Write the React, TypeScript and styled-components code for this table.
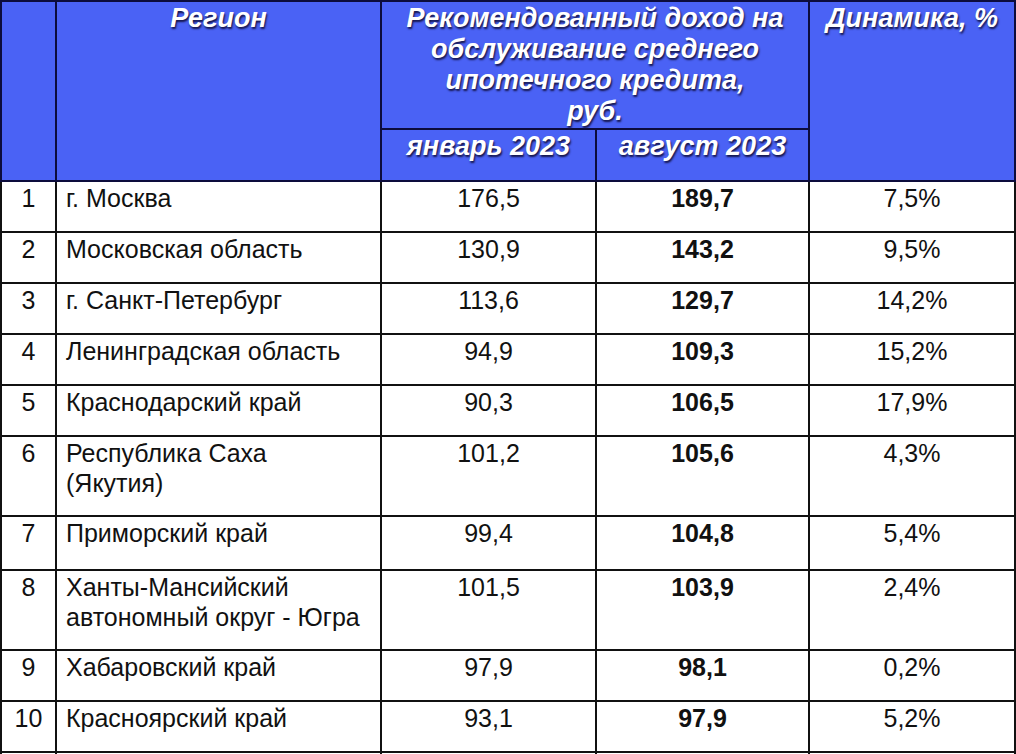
import React from "react";
import styled, { createGlobalStyle } from "styled-components";

const Global = createGlobalStyle`
  html, body { margin: 0; padding: 0; background: #ffffff; overflow: hidden; }
  body { font-family: "Liberation Sans", Arial, sans-serif; }
`;

const Page = styled.div`
  width: 1016px;
  height: 754px;
  overflow: hidden;
  background: #fff;
`;

const Table = styled.table`
  width: 1014px;
  border-collapse: collapse;
  table-layout: fixed;
  font-family: "Liberation Sans", Arial, sans-serif;
`;

const Col = styled.col<{ $w: number }>`
  width: ${(p) => p.$w}px;
`;

const HeadRow = styled.tr<{ $h: number }>`
  height: ${(p) => p.$h}px;
`;

const HeadCell = styled.th`
  background: #4a62f5;
  border: 2px solid #0c0c3c;
  color: #ffffff;
  font-size: 27px;
  font-weight: bold;
  font-style: italic;
  line-height: 31px;
  text-align: center;
  vertical-align: top;
  padding: 1px 2px 0;
  text-shadow: 1px 2px 2px #15154a;
  white-space: nowrap;
`;

const BodyRow = styled.tr<{ $h: number }>`
  height: ${(p) => p.$h}px;
`;

const Cell = styled.td<{ $align?: "left" | "center"; $bold?: boolean }>`
  border: 2px solid #111111;
  color: #111111;
  font-size: 25px;
  line-height: 30px;
  vertical-align: top;
  padding: ${(p) => (p.$align === "left" ? "1px 0 0 9px" : "1px 0 0")};
  text-align: ${(p) => p.$align ?? "center"};
  font-weight: ${(p) => (p.$bold ? "bold" : "normal")};
  white-space: nowrap;
`;

const rows: { n: string; region: string[]; jan: string; aug: string; dyn: string; h: number }[] = [
  { n: "1", region: ["г. Москва"], jan: "176,5", aug: "189,7", dyn: "7,5%", h: 51 },
  { n: "2", region: ["Московская область"], jan: "130,9", aug: "143,2", dyn: "9,5%", h: 51 },
  { n: "3", region: ["г. Санкт-Петербург"], jan: "113,6", aug: "129,7", dyn: "14,2%", h: 51 },
  { n: "4", region: ["Ленинградская область"], jan: "94,9", aug: "109,3", dyn: "15,2%", h: 51 },
  { n: "5", region: ["Краснодарский край"], jan: "90,3", aug: "106,5", dyn: "17,9%", h: 51 },
  { n: "6", region: ["Республика Саха", "(Якутия)"], jan: "101,2", aug: "105,6", dyn: "4,3%", h: 80 },
  { n: "7", region: ["Приморский край"], jan: "99,4", aug: "104,8", dyn: "5,4%", h: 54 },
  { n: "8", region: ["Ханты-Мансийский", "автономный округ - Югра"], jan: "101,5", aug: "103,9", dyn: "2,4%", h: 80 },
  { n: "9", region: ["Хабаровский край"], jan: "97,9", aug: "98,1", dyn: "0,2%", h: 51 },
  { n: "10", region: ["Красноярский край"], jan: "93,1", aug: "97,9", dyn: "5,2%", h: 51 },
];

export default function App() {
  return (
    <Page>
      <Global />
      <Table>
        <colgroup>
          <Col $w={55} />
          <Col $w={325} />
          <Col $w={215} />
          <Col $w={213} />
          <Col $w={206} />
        </colgroup>
        <thead>
          <HeadRow $h={128}>
            <HeadCell rowSpan={2} />
            <HeadCell rowSpan={2}>Регион</HeadCell>
            <HeadCell colSpan={2}>
              Рекомендованный доход на
              <br />
              обслуживание среднего
              <br />
              ипотечного кредита,
              <br />
              руб.
            </HeadCell>
            <HeadCell rowSpan={2}>Динамика, %</HeadCell>
          </HeadRow>
          <HeadRow $h={52}>
            <HeadCell>январь 2023</HeadCell>
            <HeadCell>август 2023</HeadCell>
          </HeadRow>
        </thead>
        <tbody>
          {rows.map((r) => (
            <BodyRow key={r.n} $h={r.h}>
              <Cell>{r.n}</Cell>
              <Cell $align="left">
                {r.region.map((line, i) => (
                  <React.Fragment key={i}>
                    {i > 0 && <br />}
                    {line}
                  </React.Fragment>
                ))}
              </Cell>
              <Cell>{r.jan}</Cell>
              <Cell $bold>{r.aug}</Cell>
              <Cell>{r.dyn}</Cell>
            </BodyRow>
          ))}
          <BodyRow $h={40}>
            <Cell />
            <Cell $align="left" />
            <Cell />
            <Cell />
            <Cell />
          </BodyRow>
        </tbody>
      </Table>
    </Page>
  );
}
